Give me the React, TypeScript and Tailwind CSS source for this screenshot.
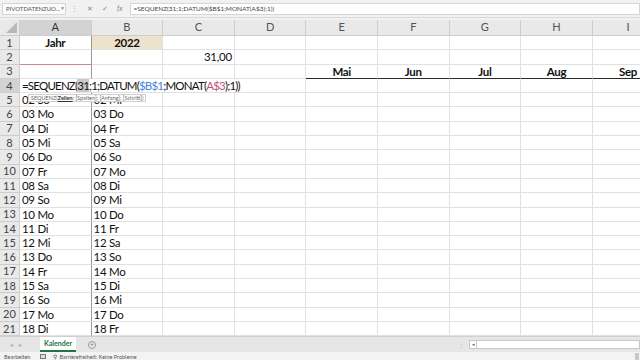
import React from 'react';

const COLS = ['A', 'B', 'C', 'D', 'E', 'F', 'G', 'H', 'I'];
const JAN = ['Sa', 'So', 'Mo', 'Di', 'Mi', 'Do', 'Fr'];
const FEB = ['Di', 'Mi', 'Do', 'Fr', 'Sa', 'So', 'Mo'];
const MONTHS: Record<string, string> = { E: 'Mai', F: 'Jun', G: 'Jul', H: 'Aug', I: 'Sep' };

const pad = (n: number) => (n < 10 ? `0${n}` : `${n}`);

interface CellInfo {
  text?: string;
  cls: string;
}

const getCell = (row: number, col: string): CellInfo => {
  let cls = 'border-r border-b border-[#e1e1e1]';
  let text: string | undefined;

  if (col === 'A') cls = 'border-r border-b border-[#e1e1e1] border-r-[#9a9a9a]';

  if (row === 1 && col === 'A') {
    text = 'Jahr';
    cls = 'border-r border-b border-[#e1e1e1] border-r-[#9a9a9a] font-bold text-center';
  }
  if (row === 1 && col === 'B') {
    text = '2022';
    cls = 'border-r border-b border-[#e1e1e1] bg-[#ede3cc] font-bold text-center';
  }
  if (row === 2 && col === 'A') cls = 'border-r border-b border-[#e1e1e1] border-r-[#9a9a9a] border-b-[#c98a8a]';
  if (row === 2 && col === 'C') {
    text = '31,00';
    cls = 'border-r border-b border-[#e1e1e1] text-right pr-[2px]';
  }
  if (row === 3 && MONTHS[col]) {
    text = MONTHS[col];
    cls = 'border-r border-b-[1.5px] border-[#e1e1e1] border-b-[#2a2a2a] font-bold text-center';
  }
  if (row >= 5 && col === 'A') {
    const d = row - 3;
    text = `${pad(d)} ${JAN[(d - 1) % 7]}`;
  }
  if (row >= 5 && col === 'B') {
    const d = row - 3;
    text = `${pad(d)} ${FEB[(d - 1) % 7]}`;
  }
  return { text, cls };
};

function FormulaBar() {
  return (
    <div className="flex h-[18px] items-center bg-[#f1f1f1] border-b border-[#dadada]">
      <div className="ml-[2px] flex h-[12px] w-[64px] items-center justify-between border border-[#d6d6d6] bg-[#fbfbfb] px-[3px] text-[6px] text-[#555]">
        <span>PIVOTDATENZUO...</span>
        <span className="text-[5px] text-[#888]">▼</span>
      </div>
      <span className="ml-[5px] text-[7px] text-[#aaa]">⋮</span>
      <div className="ml-[9px] flex items-center gap-[9px] text-[7px] text-[#8a8a8a]">
        <span>✕</span>
        <span>✓</span>
        <span className="italic">fx</span>
      </div>
      <div className="ml-[7px] flex h-[12px] flex-1 items-center border border-[#d6d6d6] bg-white pl-[3px] text-[6.5px] text-[#444]">
        =SEQUENZ(31;1;DATUM($B$1;MONAT(A$3);1))
      </div>
    </div>
  );
}

function HeaderRow() {
  return (
    <div className="flex h-[16px] bg-[#e9e9e9] text-[11px] text-[#555]">
      <div className="relative w-[20px] shrink-0 border-r border-b border-[#cdcdcd]">
        <div className="absolute bottom-[2px] right-[2px] h-0 w-0" style={{ borderBottom: '11px solid #b9b9b9', borderLeft: '11px solid transparent' }} />
      </div>
      {COLS.map((c) => (
        <div key={c} className={`flex w-[71.6px] shrink-0 items-center justify-center border-r border-b border-[#cdcdcd] ${c === 'A' ? 'bg-[#d3d3d3] text-[#333]' : ''}`}>
          {c}
        </div>
      ))}
    </div>
  );
}

function Row({ row }: { row: number }) {
  return (
    <div className="relative flex h-[14.3px] text-[11.5px] leading-[14px] tracking-[-0.3px] text-[#111]">
      <div className={`flex w-[20px] shrink-0 items-center justify-center border-r border-b border-[#cdcdcd] text-[11px] tracking-normal text-[#444] ${row === 4 ? 'bg-[#d3d3d3]' : 'bg-[#e9e9e9]'}`}>
        {row}
      </div>
      {COLS.map((c) => {
        const { text, cls } = getCell(row, c);
        return (
          <div key={c} className={`w-[71.6px] shrink-0 overflow-hidden whitespace-nowrap px-[2px] ${cls}`}>
            {text}
          </div>
        );
      })}
      {row === 4 && (
        <div className="absolute left-[21px] top-0 h-[13px] bg-white pr-[2px] pl-[1px] text-[11.5px] leading-[14px] tracking-[-0.8px] whitespace-nowrap">
          =SEQUENZ(<span className="bg-[#c9c9c9]">31</span>;1;DATUM(<span className="text-[#4a86d8]">$B$1</span>;MONAT(<span className="text-[#c04f7e]">A$3</span>);1))
        </div>
      )}
      {row === 5 && (
        <div className="absolute left-[28px] top-[1px] z-10 flex h-[8px] items-center border border-[#cfcfcf] bg-white px-[2px] text-[5.5px] leading-[6px] tracking-normal text-[#666]">
          SEQUENZ(<span className="font-bold text-[#333] underline">Zeilen</span>; [Spalten]; [Anfang]; [Schritt])
        </div>
      )}
    </div>
  );
}

function SheetTabs() {
  return (
    <div className="flex h-[16px] items-center bg-[#e6e6e6] border-t border-[#d0d0d0] text-[#aaa]">
      <span className="ml-[10px] text-[6px]">◂</span>
      <span className="ml-[6px] text-[6px]">▸</span>
      <div className="ml-[18px] flex h-full w-[36px] items-center justify-center border-b-2 border-[#217346] bg-white text-[7px] font-bold text-[#217346]">
        Kalender
      </div>
      <div className="ml-[12px] flex h-[8px] w-[8px] items-center justify-center rounded-full border border-[#999] text-[6px] leading-none text-[#777]">+</div>
      <span className="ml-[362px] text-[7px] text-[#bbb]">⋮</span>
      <div className="ml-[4px] flex h-[9px] flex-1 items-center border border-[#c8c8c8] bg-white">
        <div className="flex h-full w-[7px] items-center justify-center border-r border-[#c8c8c8] text-[5px] text-[#666]">◂</div>
      </div>
    </div>
  );
}

function StatusBar() {
  return (
    <div className="flex h-[10px] items-center bg-[#f3f3f3] border-b border-[#9cc5a9] text-[5.5px] text-[#555]">
      <span className="ml-[4px]">Bearbeiten</span>
      <span className="ml-[10px] inline-block h-[5px] w-[6px] border border-[#777] bg-[#ddd]" />
      <span className="ml-[7px] text-[6px]">⚲</span>
      <span className="ml-[2px]">Barrierefreiheit: Keine Probleme</span>
      <div className="ml-auto mr-[1px] h-[8px] w-[4px] bg-[#c8c8c8]" />
    </div>
  );
}

export default function App() {
  const rows = Array.from({ length: 21 }, (_, i) => i + 1);
  return (
    <div className="h-[360px] w-[640px] overflow-hidden bg-white" style={{ fontFamily: 'Lato, "Liberation Sans", sans-serif' }}>
      <FormulaBar />
      <div className="h-[2px] bg-[#f1f1f1]" />
      <HeaderRow />
      {rows.map((r) => (
        <Row key={r} row={r} />
      ))}
      <SheetTabs />
      <StatusBar />
    </div>
  );
}
